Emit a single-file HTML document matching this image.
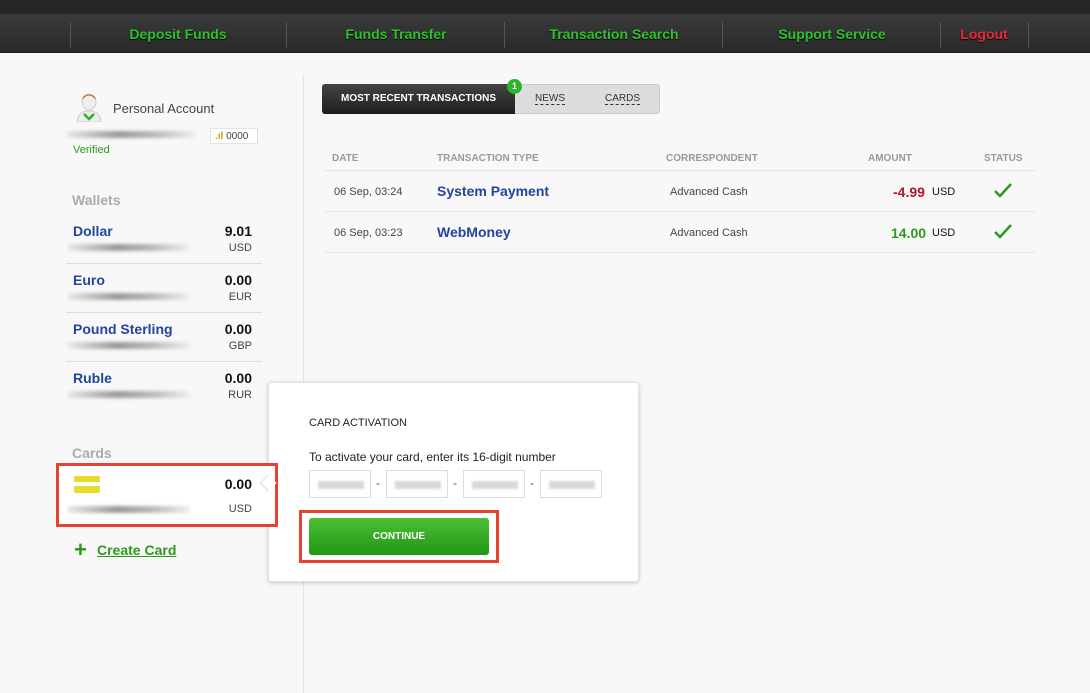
<!DOCTYPE html>
<html><head><meta charset="utf-8"><style>
*{margin:0;padding:0;box-sizing:border-box}
body{width:1090px;height:693px;background:#f8f8f8;font-family:"Liberation Sans",Arial,sans-serif;position:relative;overflow:hidden}
.a{position:absolute}
.top{left:0;top:0;width:1090px;height:14px;background:#262626}
.nav{left:0;top:14px;width:1090px;height:39px;background:linear-gradient(#3a3a3a,#2a2a2a);border-bottom:1px solid #1a1a1a}
.nav .sep{position:absolute;top:8px;width:1px;height:26px;background:#555}
.nav span{position:absolute;top:12px;font-size:14px;font-weight:bold;color:#2ec12e;text-shadow:0 1px 1px #000;transform:translateX(-50%);white-space:nowrap}
.blur{background:linear-gradient(90deg,#e8e8e8,#999 40%,#bbb 70%,#eee);height:7px;filter:blur(1.5px)}
.vline{left:303px;top:75px;width:1px;height:618px;background:#e3e3e3}
.wname{font-size:14px;font-weight:bold;color:#23449c}
.amt{font-size:14px;font-weight:bold;color:#111;text-align:right;width:60px}
.cur{font-size:11px;color:#444;text-align:right;width:60px}
.hr{height:1px;background:#ddd}
.th{font-size:10px;font-weight:bold;color:#999}
.td{font-size:11px;color:#444}
.tt{font-size:14px;font-weight:bold;color:#23449c}
.inp{width:62px;height:28px;border:1px solid #ddd;background:#fff}
.inp:after{content:"";position:absolute;left:8px;top:10px;width:46px;height:8px;background:#d8d8d8;filter:blur(1px)}
</style></head><body>
<div class="a top"></div>
<div class="a nav">
<div class="sep" style="left:70px"></div><div class="sep" style="left:286px"></div><div class="sep" style="left:504px"></div><div class="sep" style="left:722px"></div><div class="sep" style="left:940px"></div><div class="sep" style="left:1028px"></div>
<span style="left:178px">Deposit Funds</span><span style="left:396px">Funds Transfer</span><span style="left:614px">Transaction Search</span><span style="left:832px">Support Service</span><span style="left:984px;color:#e8283a">Logout</span>
</div>
<div class="a vline"></div>
<svg class="a" style="left:74px;top:92px" width="30" height="30"><ellipse cx="15" cy="10" rx="7" ry="8" fill="#eee" stroke="#ccc"/><path d="M8 8 Q15 -1 22 8 L21 5 Q15 0 9 5Z" fill="#b5652a"/><path d="M3 30 Q4 19 15 19 Q26 19 27 30Z" fill="#eee" stroke="#ccc"/><path d="M10 22 L15 27 L20 22" stroke="#2bb02b" stroke-width="2.5" fill="none"/></svg>
<div class="a" style="left:113px;top:101px;font-size:13px;color:#444">Personal Account</div>
<div class="a blur" style="left:67px;top:131px;width:128px"></div>
<div class="a" style="left:210px;top:128px;width:48px;height:16px;border:1px solid #e3e3e3;background:#fff;font-size:10px;color:#444;padding:2px 0 0 4px"><span style="color:#d89a10;font-weight:bold">.ıl</span> 0000</div>
<div class="a" style="left:73px;top:144px;font-size:11px;color:#2a9a1a">Verified</div>
<div class="a" style="left:72px;top:192px;font-size:14px;font-weight:bold;color:#aaa">Wallets</div>
<div class="a wname" style="left:73px;top:223px">Dollar</div><div class="a amt" style="left:192px;top:223px">9.01</div><div class="a blur" style="left:68px;top:244px;width:122px"></div><div class="a cur" style="left:192px;top:242px">USD</div>
<div class="a hr" style="left:66px;top:263px;width:196px"></div>
<div class="a wname" style="left:73px;top:272px">Euro</div><div class="a amt" style="left:192px;top:272px">0.00</div><div class="a blur" style="left:68px;top:293px;width:122px"></div><div class="a cur" style="left:192px;top:291px">EUR</div>
<div class="a hr" style="left:66px;top:312px;width:196px"></div>
<div class="a wname" style="left:73px;top:321px">Pound Sterling</div><div class="a amt" style="left:192px;top:321px">0.00</div><div class="a blur" style="left:68px;top:342px;width:122px"></div><div class="a cur" style="left:192px;top:340px">GBP</div>
<div class="a hr" style="left:66px;top:361px;width:196px"></div>
<div class="a wname" style="left:73px;top:370px">Ruble</div><div class="a amt" style="left:192px;top:370px">0.00</div><div class="a blur" style="left:68px;top:391px;width:122px"></div><div class="a cur" style="left:192px;top:389px">RUR</div>
<div class="a" style="left:72px;top:445px;font-size:14px;font-weight:bold;color:#aaa">Cards</div>
<div class="a" style="left:74px;top:542px;font-size:22px;font-weight:bold;color:#2a9a1a;line-height:16px">+</div>
<div class="a" style="left:97px;top:542px;font-size:14px;font-weight:bold;color:#2a9a1a;text-decoration:underline">Create Card</div>
<div class="a" style="left:322px;top:84px;width:338px;height:30px;background:#ddd;border:1px solid #ccc;border-radius:3px"></div>
<div class="a" style="left:322px;top:84px;width:193px;height:30px;background:linear-gradient(#444,#1e1e1e);border-radius:3px 0 0 3px;color:#fff;font-size:10px;font-weight:bold;text-align:center;line-height:30px">MOST RECENT TRANSACTIONS</div>
<div class="a" style="left:507px;top:79px;width:15px;height:15px;border-radius:50%;background:#2bb52b;color:#fff;font-size:9px;font-weight:bold;text-align:center;line-height:15px">1</div>
<div class="a" style="left:535px;top:93px;font-size:10px;color:#333;border-bottom:1px dashed #333">NEWS</div>
<div class="a" style="left:605px;top:93px;font-size:10px;color:#333;border-bottom:1px dashed #333">CARDS</div>
<div class="a th" style="left:332px;top:153px">DATE</div><div class="a th" style="left:437px;top:153px">TRANSACTION TYPE</div><div class="a th" style="left:666px;top:153px">CORRESPONDENT</div><div class="a th" style="left:868px;top:153px">AMOUNT</div><div class="a th" style="left:984px;top:153px">STATUS</div>
<div class="a hr" style="left:324px;top:170px;width:712px;background:#e6e6e6"></div>
<div class="a td" style="left:334px;top:186px">06 Sep, 03:24</div><div class="a tt" style="left:437px;top:183px">System Payment</div><div class="a td" style="left:670px;top:186px">Advanced Cash</div><div class="a" style="left:893px;top:184px;font-size:14px;font-weight:bold;color:#b0182a">-4.99</div><div class="a td" style="left:932px;top:186px;color:#111">USD</div>
<svg class="a" style="left:994px;top:183px" width="18" height="16"><path d="M1 8 L6 13 L17 1" stroke="#2a9a1a" stroke-width="2.5" fill="none"/></svg>
<div class="a hr" style="left:324px;top:211px;width:712px;background:#e6e6e6"></div>
<div class="a td" style="left:334px;top:227px">06 Sep, 03:23</div><div class="a tt" style="left:437px;top:224px">WebMoney</div><div class="a td" style="left:670px;top:227px">Advanced Cash</div><div class="a" style="left:891px;top:225px;font-size:14px;font-weight:bold;color:#2a9a1a">14.00</div><div class="a td" style="left:932px;top:227px;color:#111">USD</div>
<svg class="a" style="left:994px;top:224px" width="18" height="16"><path d="M1 8 L6 13 L17 1" stroke="#2a9a1a" stroke-width="2.5" fill="none"/></svg>
<div class="a hr" style="left:324px;top:252px;width:712px;background:#e6e6e6"></div>
<div class="a" style="left:268px;top:382px;width:371px;height:200px;background:#fff;border:1px solid #e2e2e2;border-radius:3px;box-shadow:0 1px 4px rgba(0,0,0,.2)"></div>
<div class="a" style="left:56px;top:463px;width:222px;height:64px;border:3px solid #e8412f;background:#fff"></div>
<div class="a" style="left:74px;top:476px;width:26px;height:17px;background:#e8dc2a;border-radius:2px"><div style="margin-top:6px;height:4px;background:#fff"></div></div>
<div class="a amt" style="left:192px;top:476px">0.00</div>
<div class="a blur" style="left:68px;top:506px;width:122px"></div><div class="a cur" style="left:192px;top:503px">USD</div>
<div class="a" style="left:262px;top:477px;width:12px;height:12px;background:#fff;transform:rotate(45deg);border-left:1px solid #ddd;border-bottom:1px solid #ddd"></div>
<div class="a" style="left:309px;top:417px;font-size:11px;color:#222">CARD ACTIVATION</div>
<div class="a" style="left:309px;top:450px;font-size:12px;color:#222">To activate your card, enter its 16-digit number</div>
<div class="a inp" style="left:309px;top:470px"></div><div class="a" style="left:376px;top:476px;font-size:12px;color:#555">-</div>
<div class="a inp" style="left:386px;top:470px"></div><div class="a" style="left:453px;top:476px;font-size:12px;color:#555">-</div>
<div class="a inp" style="left:463px;top:470px"></div><div class="a" style="left:530px;top:476px;font-size:12px;color:#555">-</div>
<div class="a inp" style="left:540px;top:470px"></div>
<div class="a" style="left:299px;top:510px;width:200px;height:53px;border:3px solid #e8412f"></div>
<div class="a" style="left:309px;top:518px;width:180px;height:37px;background:linear-gradient(#4bbf33,#229618);border-radius:3px;color:#fff;font-size:10px;font-weight:bold;text-align:center;line-height:37px">CONTINUE</div>
</body></html>
